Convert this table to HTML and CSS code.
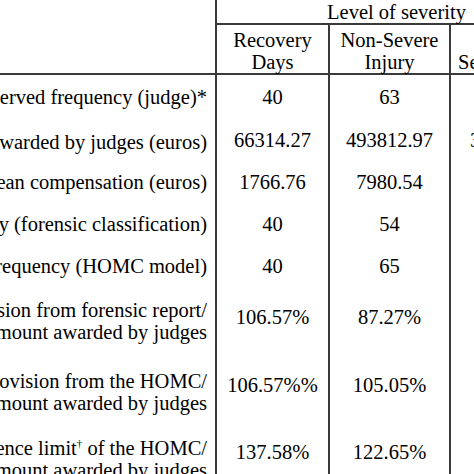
FILE: index.html
```html
<!DOCTYPE html>
<html>
<head>
<meta charset="utf-8">
<link rel="stylesheet" href="styles.css">
</head>
<body>
<div class="table">
  <div class="cell corner"></div>
  <div class="cell group">Level of severity</div>

  <div class="cell head">Recovery<br>Days</div>
  <div class="cell head">Non-Severe<br>Injury</div>
  <div class="cell head bottom">Severe Injury</div>

  <div class="cell label"><span>Observed frequency (judge)*</span></div>
  <div class="cell val">40</div>
  <div class="cell val">63</div>
  <div class="cell val">53</div>

  <div class="cell label lower"><span>Total amount awarded by judges (euros)</span></div>
  <div class="cell val">66314.27</div>
  <div class="cell val">493812.97</div>
  <div class="cell val">362085.23</div>

  <div class="cell label"><span>Mean compensation (euros)</span></div>
  <div class="cell val">1766.76</div>
  <div class="cell val">7980.54</div>
  <div class="cell val">6831.80</div>

  <div class="cell label"><span>Frequency (forensic classification)</span></div>
  <div class="cell val">40</div>
  <div class="cell val">54</div>
  <div class="cell val">62</div>

  <div class="cell label"><span>Expected frequency (HOMC model)</span></div>
  <div class="cell val">40</div>
  <div class="cell val">65</div>
  <div class="cell val">51</div>

  <div class="cell label two r6"><span>Compensation provision from forensic report/<br>amount awarded by judges</span></div>
  <div class="cell val">106.57%</div>
  <div class="cell val">87.27%</div>
  <div class="cell val">98.12%</div>

  <div class="cell label two r7"><span>Compensation provision from the HOMC/<br>amount awarded by judges</span></div>
  <div class="cell val">106.57%%</div>
  <div class="cell val">105.05%</div>
  <div class="cell val">94.36%</div>

  <div class="cell label two r8"><span>Upper confidence limit<sup>†</sup> of the HOMC/<br>amount awarded by judges</span></div>
  <div class="cell val">137.58%</div>
  <div class="cell val">122.65%</div>
  <div class="cell val">118.40%</div>
</div>
</body>
</html>
```

FILE: styles.css
```css
html, body {
  margin: 0;
  padding: 0;
  background: #ffffff;
}

body {
  width: 474px;
  height: 474px;
  overflow: hidden;
  font-family: "Liberation Serif", "DejaVu Serif", serif;
  font-size: 20.5px;
  line-height: 22px;
  color: #000000;
}

.table {
  display: grid;
  grid-template-columns: 215px 113px 121px 127px;
  grid-template-rows: 25px 50px 44px 42px 42px 41px 44px 58px 78px 56px;
  width: 576px;
}

.cell {
  box-sizing: border-box;
  display: flex;
  align-items: center;
  justify-content: center;
  white-space: nowrap;
}

.corner {
  grid-row: 1 / 3;
  grid-column: 1;
  border-bottom: 2px solid #3a3a3a;
}

.group {
  grid-row: 1;
  grid-column: 2 / 5;
  border-left: 2px solid #3a3a3a;
  border-bottom: 2px solid #3a3a3a;
  padding-top: 1px;
}

.head {
  border-left: 2px solid #3a3a3a;
  border-bottom: 2px solid #3a3a3a;
  text-align: center;
  align-items: flex-start;
  padding-top: 4px;
}

.head.bottom {
  align-items: flex-end;
  padding-top: 0;
}

.label {
  justify-content: flex-end;
  padding-right: 8px;
  text-align: right;
}

.label.lower {
  padding-top: 4px;
}

.label.r6 {
  padding-top: 7px;
}

.label.r7 {
  padding-top: 13px;
}

.label.r8 {
  padding-top: 14px;
}

.val {
  border-left: 2px solid #3a3a3a;
}

sup {
  font-size: 11px;
  line-height: 0;
  vertical-align: 8px;
}
```
